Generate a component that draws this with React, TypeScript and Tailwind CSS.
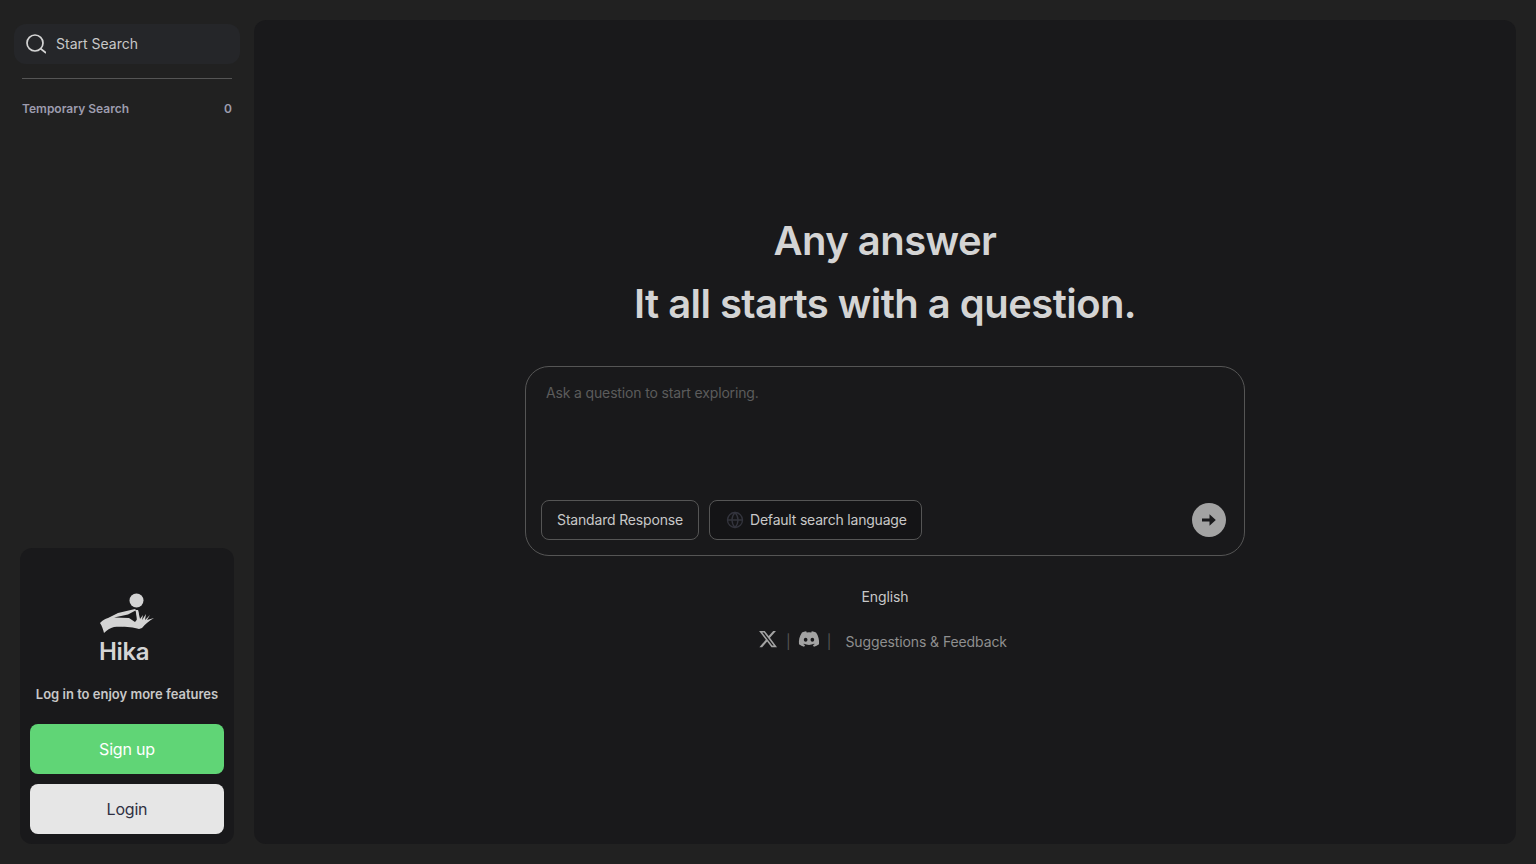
import React from 'react'
import { Globe } from 'lucide-react'
import { FaDiscord } from 'react-icons/fa'
import { FaXTwitter } from 'react-icons/fa6'

/** Hand-with-ball logo from the sidebar card */
function HikaLogo(): React.JSX.Element {
  return (
    <svg width="56" height="40" viewBox="0 0 56 40" fill="#d4d4d4">
      <circle cx="37.5" cy="7.5" r="7" />
      <path d="M1 30 C4 27 6 26 9 25 L19 20 L36 16 L37 17 L39 17 L41 26 L44 22 L43 27 L47 21 L46 27 L51 22 L48 27 L55 25 C50 28 46 31 43 35 L40 36 C34 34 22 33.5 15 34 C11 35 8 37 5 40 C4 36 3 33 1 30 Z" />
      <path d="M29 21.5 L36.5 17.5 L38.5 26 L36 29 L30 25 L15 24.5 Z" fill="#19191b" />
      <path d="M37 17 L39 17 L40.5 27 L38 29 Z" />
    </svg>
  )
}

export default function App(): React.JSX.Element {
  return (
    <div className="flex h-[864px] w-[1536px] overflow-hidden bg-[#212121] font-['Inter',sans-serif] antialiased">
      {/* Sidebar */}
      <aside className="flex w-[254px] shrink-0 flex-col pt-6 pb-5">
        <div className="ml-3.5 flex h-10 w-[226px] items-center gap-[10px] rounded-xl bg-[#252629] pl-3 text-sm text-[#c8c8c8]">
          <svg width="20" height="20" viewBox="0 0 20 20" fill="none" stroke="#d4d4d4" strokeWidth="1.7" strokeLinecap="round">
            <circle cx="9" cy="9" r="8" />
            <path d="M15 15 L19.5 18.5" />
          </svg>
          <span>Start Search</span>
        </div>
        <div className="mx-[22px] mt-3.5 h-px bg-[#555555]" />
        <div className="mx-[22px] mt-[22px] flex items-center justify-between text-xs font-semibold text-[#9d9cae]">
          <span>Temporary Search</span>
          <span>0</span>
        </div>

        {/* Login card */}
        <div className="mt-auto ml-5 flex h-[296px] w-[214px] flex-col rounded-xl bg-[#19191b] px-2.5 pt-[45px]">
          <div className="ml-[69px]">
            <HikaLogo />
          </div>
          <div className="mt-[3px] ml-[69px] text-2xl leading-8 font-semibold tracking-[-0.4px] text-[#d4d4d4]">Hika</div>
          <p className="mt-4 text-center text-[13px] leading-5 font-semibold text-[#c8c8c8]">
            Log in to enjoy more features
          </p>
          <button className="mt-5 h-[50px] rounded-lg bg-[#60d576] text-base tracking-[-0.2px] text-white">Sign up</button>
          <button className="mt-2.5 h-[50px] rounded-lg bg-[#e6e6e6] text-base tracking-[-0.2px] text-[#2f3042]">Login</button>
        </div>
      </aside>

      {/* Main panel */}
      <main className="mt-5 mb-5 flex w-[1262px] flex-col items-center rounded-xl bg-[#19191b] pt-[189px]">
        <h1 className="text-center text-[40px] leading-[63px] font-semibold tracking-[-0.55px] text-[#d4d4d4]">
          Any answer
          <br />
          It all starts with a question.
        </h1>

        <div className="mt-[31px] flex h-[190px] w-[720px] flex-col rounded-3xl border border-[#555555] pt-[17px] pr-[18px] pb-[15px] pl-[15px]">
          <div className="pl-[5px] text-sm leading-[18px] tracking-[-0.15px] text-[#5c5c5c]">Ask a question to start exploring.</div>
          <div className="mt-auto flex items-center">
            <button className="h-10 w-[158px] rounded-lg border border-[#555555] text-sm tracking-[-0.18px] text-[#c8c8c8]">
              Standard Response
            </button>
            <button className="ml-2.5 flex h-10 w-[213px] items-center gap-[6px] rounded-lg border border-[#555555] bg-[#141416] pl-4 text-sm tracking-[-0.2px] text-[#c8c8c8]">
              <Globe size={18} strokeWidth={1.8} color="#33343d" />
              Default search language
            </button>
            <button className="ml-auto flex h-[34px] w-[34px] items-center justify-center rounded-full bg-[#a3a3a3]">
              <svg width="14" height="12" viewBox="0 0 14 12" fill="#19191b">
                <path d="M0 4.5 H7.5 V0.2 L13.8 6 L7.5 11.8 V7.5 H0 Z" />
              </svg>
            </button>
          </div>
        </div>

        <div className="mt-[32px] text-sm leading-[18px] tracking-[-0.1px] text-[#c8c8c8]">English</div>

        <div className="mt-[25px] mr-[5px] flex items-center text-sm text-[#8f8f8f]">
          <FaXTwitter size={20} color="#a3a3a3" className="relative -top-[3px]" />
          <span className="ml-[8px] text-[#555555]">|</span>
          <FaDiscord size={22} color="#a3a3a3" className="relative -top-[3px] ml-[7px]" />
          <span className="ml-[7px] text-[#555555]">|</span>
          <span className="ml-[14px] tracking-[-0.1px]">Suggestions &amp; Feedback</span>
        </div>
      </main>
    </div>
  )
}
